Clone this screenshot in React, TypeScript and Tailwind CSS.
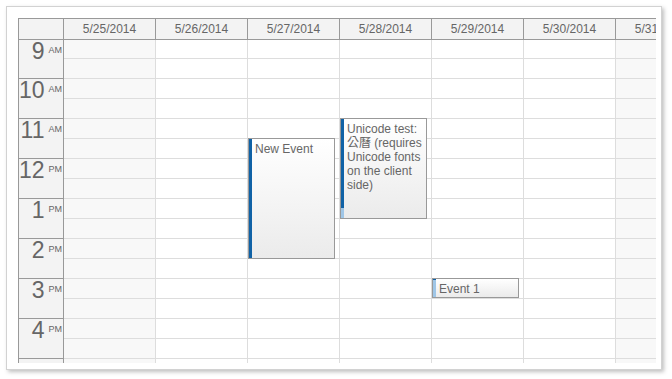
import React from "react";

const days = [
  "5/25/2014",
  "5/26/2014",
  "5/27/2014",
  "5/28/2014",
  "5/29/2014",
  "5/30/2014",
  "5/31/2014",
];

const hours = [
  { h: "9", ap: "AM" },
  { h: "10", ap: "AM" },
  { h: "11", ap: "AM" },
  { h: "12", ap: "PM" },
  { h: "1", ap: "PM" },
  { h: "2", ap: "PM" },
  { h: "3", ap: "PM" },
  { h: "4", ap: "PM" },
];

type Ev = {
  text: string;
  left: number;
  top: number;
  height: number;
  dark: number; // height of the dark part of the duration bar
};

const events: Ev[] = [
  { text: "New Event", left: 230, top: 120, height: 121, dark: 121 },
  {
    text: "Unicode test: 公曆 (requires Unicode fonts on the client side)",
    left: 322,
    top: 100,
    height: 101,
    dark: 90,
  },
  { text: "Event 1", left: 414, top: 260, height: 20, dark: 2 },
];

function HourLabel({ h, ap, first }: { h: string; ap: string; first: boolean }) {
  return (
    <div
      className={`flex justify-end items-start pr-[1px] border-b border-[#999] text-[#666] ${first ? "h-[39px]" : "h-[40px]"}`}
    >
      <span className="text-[23px] leading-none font-['Liberation_Sans_Narrow','Liberation_Sans',sans-serif]">
        {h}
      </span>
      <span className="text-[9px] leading-none mt-[6px] ml-[4px]">{ap}</span>
    </div>
  );
}

function EventBox({ ev }: { ev: Ev }) {
  return (
    <div
      className="absolute w-[87px] border border-[#999] bg-linear-to-b from-white to-[#ebebeb] text-[#666] text-[12px] leading-[14px] overflow-hidden"
      style={{ left: ev.left, top: ev.top, height: ev.height }}
    >
      <div className="absolute left-[-1px] top-[-1px] bottom-[-1px] w-[4px] bg-[#9fc6e7]">
        <div className="w-full bg-[#1062a6]" style={{ height: ev.dark }} />
      </div>
      <div className="pl-[6px] pr-[1px] pt-[3px]">{ev.text}</div>
    </div>
  );
}

export default function App() {
  return (
    <div className="w-[672px] h-[379px] bg-white pt-[6px] pl-[6px] font-['Liberation_Sans','Noto_Sans_CJK_TC',sans-serif]">
      <div className="w-[656px] h-[364px] border border-[#d2d2d2] bg-white shadow-[2px_2px_4px_rgba(0,0,0,0.25)] pl-[11px] pt-[11px]">
        <div className="relative w-[638px] h-[345px] overflow-hidden">
          {/* header */}
          <div className="flex h-[22px] border-t border-b border-[#999] bg-[#f3f3f3]">
            <div className="w-[46px] shrink-0 border-l border-r border-[#999]" />
            {days.map((d) => (
              <div
                key={d}
                className="w-[92px] shrink-0 border-r border-[#999] flex items-center justify-center text-[12px] text-[#666]"
              >
                {d}
              </div>
            ))}
          </div>

          {/* body */}
          <div className="flex">
            <div className="w-[46px] shrink-0 border-l border-r border-[#999] bg-[#f3f3f3]">
              {hours.map((x, i) => (
                <HourLabel key={x.h} h={x.h} ap={x.ap} first={i === 0} />
              ))}
              {/* 5 PM row, only its top edge is in view */}
              <div className="h-[40px]" />
            </div>
            {days.map((d, di) => (
              <div
                key={d}
                className={`w-[92px] shrink-0 border-r border-[#ddd] ${di === 0 || di === 6 ? "bg-[#f8f8f8]" : "bg-white"}`}
              >
                {Array.from({ length: 18 }).map((_, i) => (
                  <div
                    key={i}
                    className={`border-b border-[#ddd] ${i === 0 ? "h-[19px]" : "h-[20px]"}`}
                  />
                ))}
              </div>
            ))}
          </div>

          {events.map((ev) => (
            <EventBox key={ev.text} ev={ev} />
          ))}
        </div>
      </div>
    </div>
  );
}
